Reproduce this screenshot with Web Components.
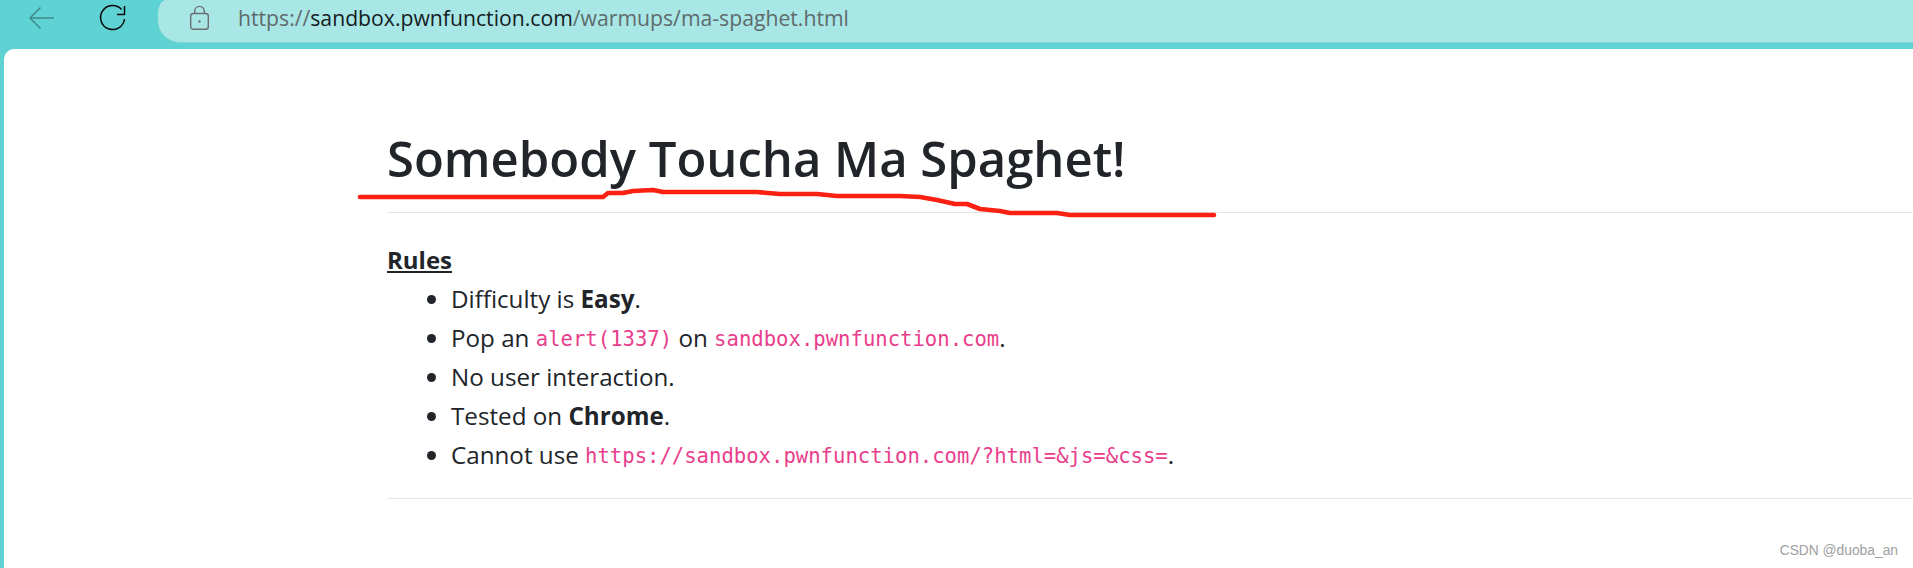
<!DOCTYPE html>
<html><head><meta charset="utf-8"><style>
html,body{margin:0;padding:0;height:568px;overflow:hidden;background:#5fd2d3}
body{font-family:"Open Sans","Noto Sans",sans-serif}
</style></head><body>
<browser-window>
<browser-toolbar url-host="sandbox.pwnfunction.com" url-path="/warmups/ma-spaghet.html"></browser-toolbar>
<challenge-page>
<h-title>Somebody Toucha Ma Spaghet!</h-title>
<rules-list></rules-list>
</challenge-page>
</browser-window>
<script>
class BrowserWindow extends HTMLElement{constructor(){super();this.attachShadow({mode:'open'}).innerHTML=`<style>:host{display:flex;flex-direction:column;width:1913px;height:568px;background:#5fd2d3}</style><slot></slot>`}}
class BrowserToolbar extends HTMLElement{constructor(){super();const h=this.getAttribute('url-host'),p=this.getAttribute('url-path');this.attachShadow({mode:'open'}).innerHTML=`<style>
:host{display:flex;height:49px;flex:none;background:#5fd2d3;align-items:flex-start}
.nav{display:flex;align-items:center;height:35px;width:158px;flex:none;padding-left:29px;box-sizing:border-box;gap:46px}
svg{display:block;flex:none;overflow:visible}
.addr{flex:1;height:42px;background:#a8e7e6;border-radius:8px 0 0 22px/14px 0 0 22px;display:flex;align-items:center;box-sizing:border-box;padding:0 0 7px 32px;box-shadow:0 1px 1px #7fd9d8}
.url{font:21.2px/35px "Open Sans",sans-serif;color:#5f6b6c;margin-left:29px;white-space:nowrap}
.url b{font-weight:400;color:#15201f}
</style>
<div class="nav">
<svg width="25" height="22" viewBox="0 0 25 22" fill="none" stroke="#3f8b8c" stroke-width="1.5"><path d="M.5 11H25M11.5 .5 1 11l10.5 10.5"/></svg>
<svg width="25" height="25" viewBox="0 0 25 25" fill="none" stroke="#0a0a0a" stroke-width="1.5" stroke-linejoin="round"><path d="M21.5 4.5A12 12 0 1 0 24.5 14"/><path d="M17 9.5H24.5V1"/></svg>
</div>
<div class="addr">
<svg width="19" height="24" viewBox="0 0 19 24" fill="none" stroke="#6c7070" stroke-width="1.4"><rect x=".7" y="7.5" width="17.6" height="15.8" rx="2.5"/><path d="M4.7 7.5V5.2a4.8 4.8 0 0 1 9.6 0V7.5"/><circle cx="9.5" cy="15.5" r="1.2" fill="#6c7070" stroke="none"/></svg>
<span class="url">https://<b>${h}</b>${p}</span>
</div>`}}
class ChallengePage extends HTMLElement{constructor(){super();this.attachShadow({mode:'open'}).innerHTML=`<style>
:host{display:block;flex:1;position:relative;margin-left:4px;background:#fff;border-top-left-radius:10px;padding:0 0 0 383px;color:#212529;overflow:hidden}
.mark{position:absolute;left:-4px;top:-49px;pointer-events:none}
.foot{position:absolute;right:15px;bottom:10px;font:13.8px "Liberation Sans",sans-serif;color:#a0a0a0}
</style><slot></slot>
<svg class="mark" width="1913" height="568" fill="none" stroke="#fa2012" stroke-width="4.6" stroke-linecap="round" stroke-linejoin="round"><path d="M360 197H603L608 193H623L633 191 653 190 663 192H757L780 194 817 194 837 196H900L920 197 937 200 955 204H967L980 209 1000 211 1010 213H1057L1070 215H1214"/></svg>
<span class="foot">CSDN @duoba_an</span>`}}
class HTitle extends HTMLElement{constructor(){super();this.attachShadow({mode:'open'}).innerHTML=`<style>
:host{display:block;padding-top:74px;height:89px;border-bottom:1px solid #e5e6e7;font:600 49px/70px "Open Sans",sans-serif;color:#212529;white-space:nowrap}
</style><slot></slot>`}}
class RulesList extends HTMLElement{constructor(){super();this.attachShadow({mode:'open'}).innerHTML=`<style>
:host{display:block;padding-top:27px;height:258px;border-bottom:1px solid #e5e6e7;font:24.2px/39px "Open Sans",sans-serif;color:#212529}
.t{font-weight:700;text-decoration:underline;line-height:39px;display:block;font-size:24px}
ul{margin:0;padding:0 0 0 64px}
li{height:39px;white-space:nowrap}
code{font:20.6px "DejaVu Sans Mono",monospace;color:#e83e8c;vertical-align:1px}
b{font-weight:700}
</style>
<span class="t">Rules</span>
<ul>
<li>Difficulty is <b>Easy</b>.</li>
<li>Pop an <code>alert(1337)</code> on <code>sandbox.pwnfunction.com</code>.</li>
<li>No user interaction.</li>
<li>Tested on <b>Chrome</b>.</li>
<li>Cannot use <code>https://sandbox.pwnfunction.com/?html=&amp;js=&amp;css=</code>.</li>
</ul>`}}
customElements.define('browser-window',BrowserWindow);
customElements.define('browser-toolbar',BrowserToolbar);
customElements.define('challenge-page',ChallengePage);
customElements.define('h-title',HTitle);
customElements.define('rules-list',RulesList);
</script>
</body></html>
